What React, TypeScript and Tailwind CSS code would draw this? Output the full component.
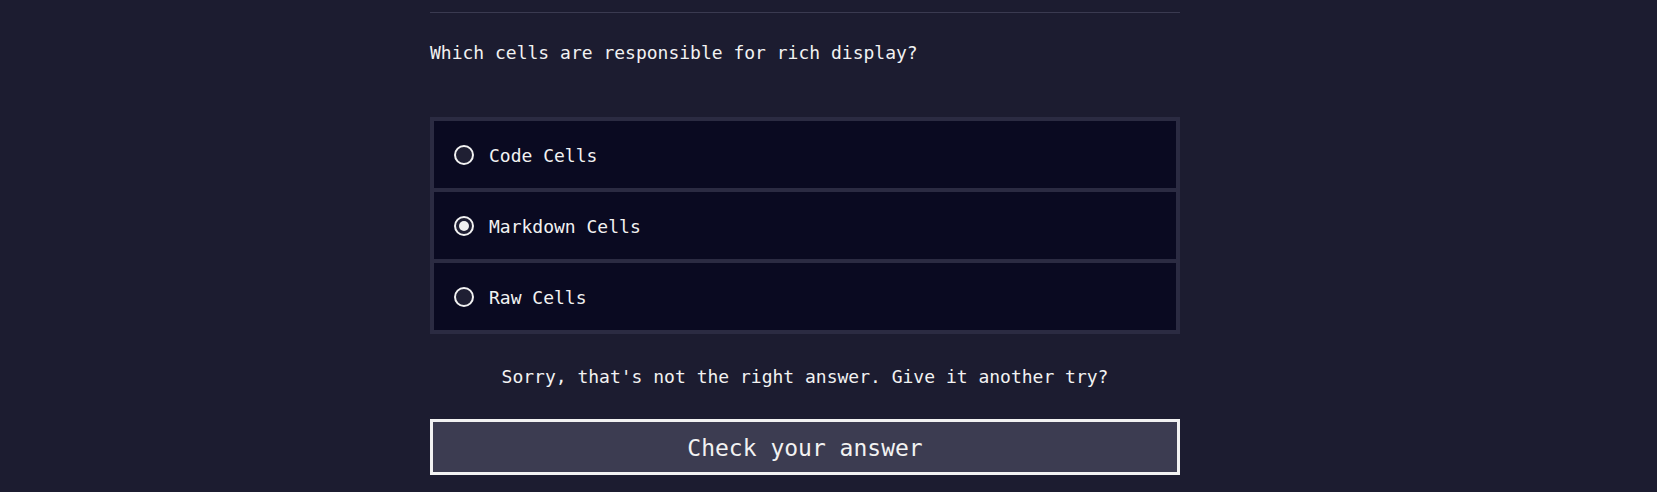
import React, { useState } from "react";

const options = ["Code Cells", "Markdown Cells", "Raw Cells"];

const Radio = ({ checked }: { checked: boolean }) => (
  <span className="flex h-[20px] w-[20px] shrink-0 items-center justify-center rounded-full border-2 border-[#f2f2f2] bg-[#1f1f33]">
    {checked && <span className="h-[10px] w-[10px] rounded-full bg-[#f2f2f2]" />}
  </span>
);

const App = () => {
  const [selected, setSelected] = useState("Markdown Cells");

  return (
    <div className="min-h-screen w-full bg-[#1c1c30] text-[#f2f2f2] font-['DejaVu_Sans_Mono',monospace]">
      <div className="ml-[430px] w-[750px] pt-[12px]">
        <div className="h-px w-full bg-[#3a3a50]" />
        <p className="mt-[26px] text-[18px] leading-[27px]">
          Which cells are responsible for rich display?
        </p>
        <div className="mt-[51px] flex flex-col gap-[4px] border-4 border-[#2b2b42] bg-[#2b2b42]">
          {options.map((opt) => (
            <label
              key={opt}
              onClick={() => setSelected(opt)}
              className="flex h-[67px] cursor-pointer items-center gap-[15px] bg-[#0a0a21] pl-[20px] text-[18px]"
            >
              <Radio checked={selected === opt} />
              <span className="pt-[2px]">{opt}</span>
            </label>
          ))}
        </div>
        <p className="mt-[29px] text-center text-[18px] leading-[27px]">
          Sorry, that's not the right answer. Give it another try?
        </p>
        <button className="mt-[29px] flex h-[56px] w-full items-center justify-center border-[3px] border-[#f2f2f2] bg-[#3c3c51] pt-[3px] text-[23px] text-[#f2f2f2]">
          Check your answer
        </button>
      </div>
    </div>
  );
};

export default App;
